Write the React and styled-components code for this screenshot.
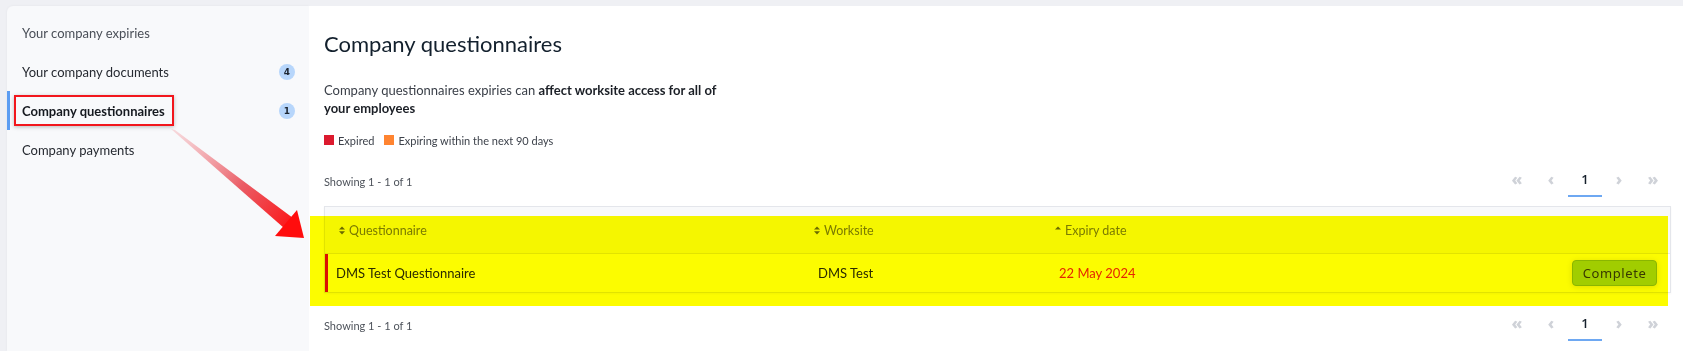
import React from 'react'
import styled, { createGlobalStyle } from 'styled-components'

const GlobalStyle = createGlobalStyle`
  html, body {
    margin: 0;
    padding: 0;
    background: #eff0f4;
  }
  body {
    font-family: 'Lato', 'Noto Sans', sans-serif;
    color: #2b2f36;
  }
`

const menu = [
  { label: 'Your company expiries', muted: true },
  { label: 'Your company documents', count: 4 },
  { label: 'Company questionnaires', count: 1, active: true },
  { label: 'Company payments' },
]

const columns = [
  { label: 'Questionnaire', sort: 'both' },
  { label: 'Worksite', sort: 'both' },
  { label: 'Expiry date', sort: 'up' },
]

function SortIcon({ dir }) {
  return (
    <svg width="6" height="9" viewBox="0 0 6 9">
      {dir !== 'down' && <path d="M0 3.6 L3 0.4 L6 3.6 Z" fill="currentColor" />}
      {dir === 'both' && <path d="M0 5.2 L3 8.4 L6 5.2 Z" fill="currentColor" />}
    </svg>
  )
}

function Pager() {
  return (
    <Pages>
      <PageLink>«</PageLink>
      <PageLink>‹</PageLink>
      <PageLink current>1</PageLink>
      <PageLink>›</PageLink>
      <PageLink>»</PageLink>
    </Pages>
  )
}

function App() {
  return (
    <Page>
      <GlobalStyle />
      <SideBar>
        {menu.map((item) => (
          <MenuItem key={item.label} active={item.active} muted={item.muted}>
            <span>{item.label}</span>
            {item.count && <Count>{item.count}</Count>}
            {item.active && <Callout />}
          </MenuItem>
        ))}
      </SideBar>

      <Main>
        <Title>Company questionnaires</Title>
        <Intro>
          <span>
            Company questionnaires expiries can <b>affect worksite access for all of</b>
          </span>
          <b>your employees</b>
        </Intro>
        <Legend>
          <Swatch color="#dc1a2e" />
          <span>Expired</span>
          <Swatch color="#ff8431" />
          <span>Expiring within the next 90 days</span>
        </Legend>

        <ListBar>
          <span>Showing 1 - 1 of 1</span>
          <Pager />
        </ListBar>

        <Table>
          <HeadRow>
            {columns.map((col) => (
              <HeadCell key={col.label}>
                <SortIcon dir={col.sort} />
                {col.label}
              </HeadCell>
            ))}
          </HeadRow>
          <Row status="expired">
            <Cell>DMS Test Questionnaire</Cell>
            <Cell>DMS Test</Cell>
            <Cell expired>22 May 2024</Cell>
            <Cell>
              <CompleteButton>Complete</CompleteButton>
            </Cell>
          </Row>
        </Table>

        <ListBar bottom>
          <span>Showing 1 - 1 of 1</span>
          <Pager />
        </ListBar>
      </Main>

      <Highlight />
      <Arrow viewBox="0 0 1683 351">
        <defs>
          <linearGradient id="shaft" x1="172" y1="128" x2="300" y2="232" gradientUnits="userSpaceOnUse">
            <stop offset="0" stopColor="#f4a3a8" stopOpacity="0.35" />
            <stop offset="0.55" stopColor="#e8404a" stopOpacity="0.85" />
            <stop offset="1" stopColor="#ff0a0a" />
          </linearGradient>
        </defs>
        <path d="M171 129 L175 130 L293 218 L284 228 Z" fill="url(#shaft)" />
        <path d="M275 236 L297 210 L304 238 Z" fill="#ff0d0d" />
      </Arrow>
    </Page>
  )
}

const Page = styled.div`
  position: relative;
  display: flex;
  width: 1683px;
  height: 351px;
  padding: 6px 0 0 7px;
  box-sizing: border-box;
  overflow: hidden;
`

const SideBar = styled.nav`
  width: 302px;
  flex-shrink: 0;
  background: #f8f9fb;
  border-top-left-radius: 6px;
  box-shadow: 0 0 3px rgba(0, 0, 0, 0.05);
  padding-top: 7px;
`

const MenuItem = styled.div`
  position: relative;
  display: flex;
  align-items: center;
  justify-content: space-between;
  height: 39px;
  padding: 0 14px 0 ${(p) => (p.active ? '12px' : '15px')};
  border-left: ${(p) => (p.active ? '3px solid #5c9df2' : 'none')};
  font-size: 13px;
  font-weight: ${(p) => (p.active ? 700 : 400)};
  color: ${(p) => (p.active ? '#15191f' : p.muted ? '#4a4f58' : '#262a31')};
`

const Count = styled.span`
  display: flex;
  align-items: center;
  justify-content: center;
  width: 16px;
  height: 16px;
  border-radius: 50%;
  background: #b7d6fb;
  color: #1d2530;
  font-family: 'DejaVu Sans', sans-serif;
  font-size: 9px;
  font-weight: 700;
`

const Callout = styled.span`
  position: absolute;
  left: 4px;
  top: 4px;
  width: 156px;
  height: 27px;
  border: 2px solid #f2161c;
  box-shadow: 0 1px 4px rgba(0, 0, 0, 0.25);
  pointer-events: none;
`

const Main = styled.main`
  flex: 1;
  background: #ffffff;
  padding: 25px 12px 0 15px;
  min-width: 0;
`

const Title = styled.h1`
  margin: 0;
  font-size: 22px;
  line-height: 26px;
  font-weight: 400;
  color: #13202d;
`

const Intro = styled.p`
  display: flex;
  flex-direction: column;
  margin: 24px 0 0;
  font-size: 13px;
  line-height: 18px;
  color: #3b4049;

  b {
    font-weight: 700;
    color: #1b1f26;
  }
`

const Legend = styled.div`
  display: flex;
  align-items: center;
  gap: 4px;
  margin-top: 16px;
  height: 14px;
  font-size: 11px;
  color: #3d424b;

  span + i {
    margin-left: 6px;
  }
`

const Swatch = styled.i`
  width: 10px;
  height: 10px;
  background: ${(p) => p.color};
`

const ListBar = styled.div`
  display: flex;
  align-items: center;
  justify-content: space-between;
  height: 32px;
  margin-top: ${(p) => (p.bottom ? '16px' : '18px')};
  font-size: 11px;
  color: #4e535b;
`

const Pages = styled.div`
  display: flex;
  align-items: stretch;
  height: 32px;
  margin-right: 1px;
`

const PageLink = styled.span`
  display: flex;
  align-items: center;
  justify-content: center;
  width: 34px;
  box-sizing: border-box;
  padding-bottom: 2px;
  border-bottom: 2px solid ${(p) => (p.current ? '#6ea8f2' : 'transparent')};
  font-family: 'Open Sans', sans-serif;
  font-size: ${(p) => (p.current ? '13px' : '16px')};
  font-weight: ${(p) => (p.current ? 600 : 800)};
  color: ${(p) => (p.current ? '#16202c' : '#cfd2d8')};
`

const Table = styled.div`
  margin-top: 9px;
  border: 1px solid #e4e6eb;
  box-shadow: 0 1px 2px rgba(0, 0, 0, 0.04);
`

const HeadRow = styled.div`
  display: grid;
  grid-template-columns: 475px 241px 1fr;
  height: 46px;
  align-items: center;
  background: #f8f9fb;
  border-bottom: 1px solid #e5e6e9;
`

const HeadCell = styled.div`
  display: flex;
  align-items: center;
  gap: 4px;
  padding-left: 14px;
  font-size: 12.5px;
  color: #7c7c7c;

  svg {
    color: #6a6a6a;
  }
`

const Row = styled.div`
  display: grid;
  grid-template-columns: 482px 241px 1fr auto;
  align-items: center;
  height: 38px;
  border-left: 3px solid ${(p) => (p.status === 'expired' ? '#dd1111' : 'transparent')};
  background: #ffffff;
`

const Cell = styled.div`
  padding: 0 13px 0 8px;
  font-size: 13px;
  color: ${(p) => (p.expired ? '#e8262a' : '#2a2a2a')};

  &:last-child {
    padding-left: 0;
  }
`

const CompleteButton = styled.button`
  width: 85px;
  height: 26px;
  border: 1px solid #8cb83a;
  border-radius: 4px;
  background: #a3d04a;
  box-shadow: 0 1px 6px rgba(0, 0, 0, 0.12);
  font-family: 'Noto Sans', sans-serif;
  font-size: 13px;
  letter-spacing: 0.6px;
  color: #38381a;
  cursor: pointer;
`

const Highlight = styled.div`
  position: absolute;
  left: 310px;
  top: 216px;
  width: 1358px;
  height: 90px;
  background: #fcfc00;
  mix-blend-mode: multiply;
  pointer-events: none;
`

const Arrow = styled.svg`
  position: absolute;
  left: 0;
  top: 0;
  width: 1683px;
  height: 351px;
  pointer-events: none;
`

export default App
